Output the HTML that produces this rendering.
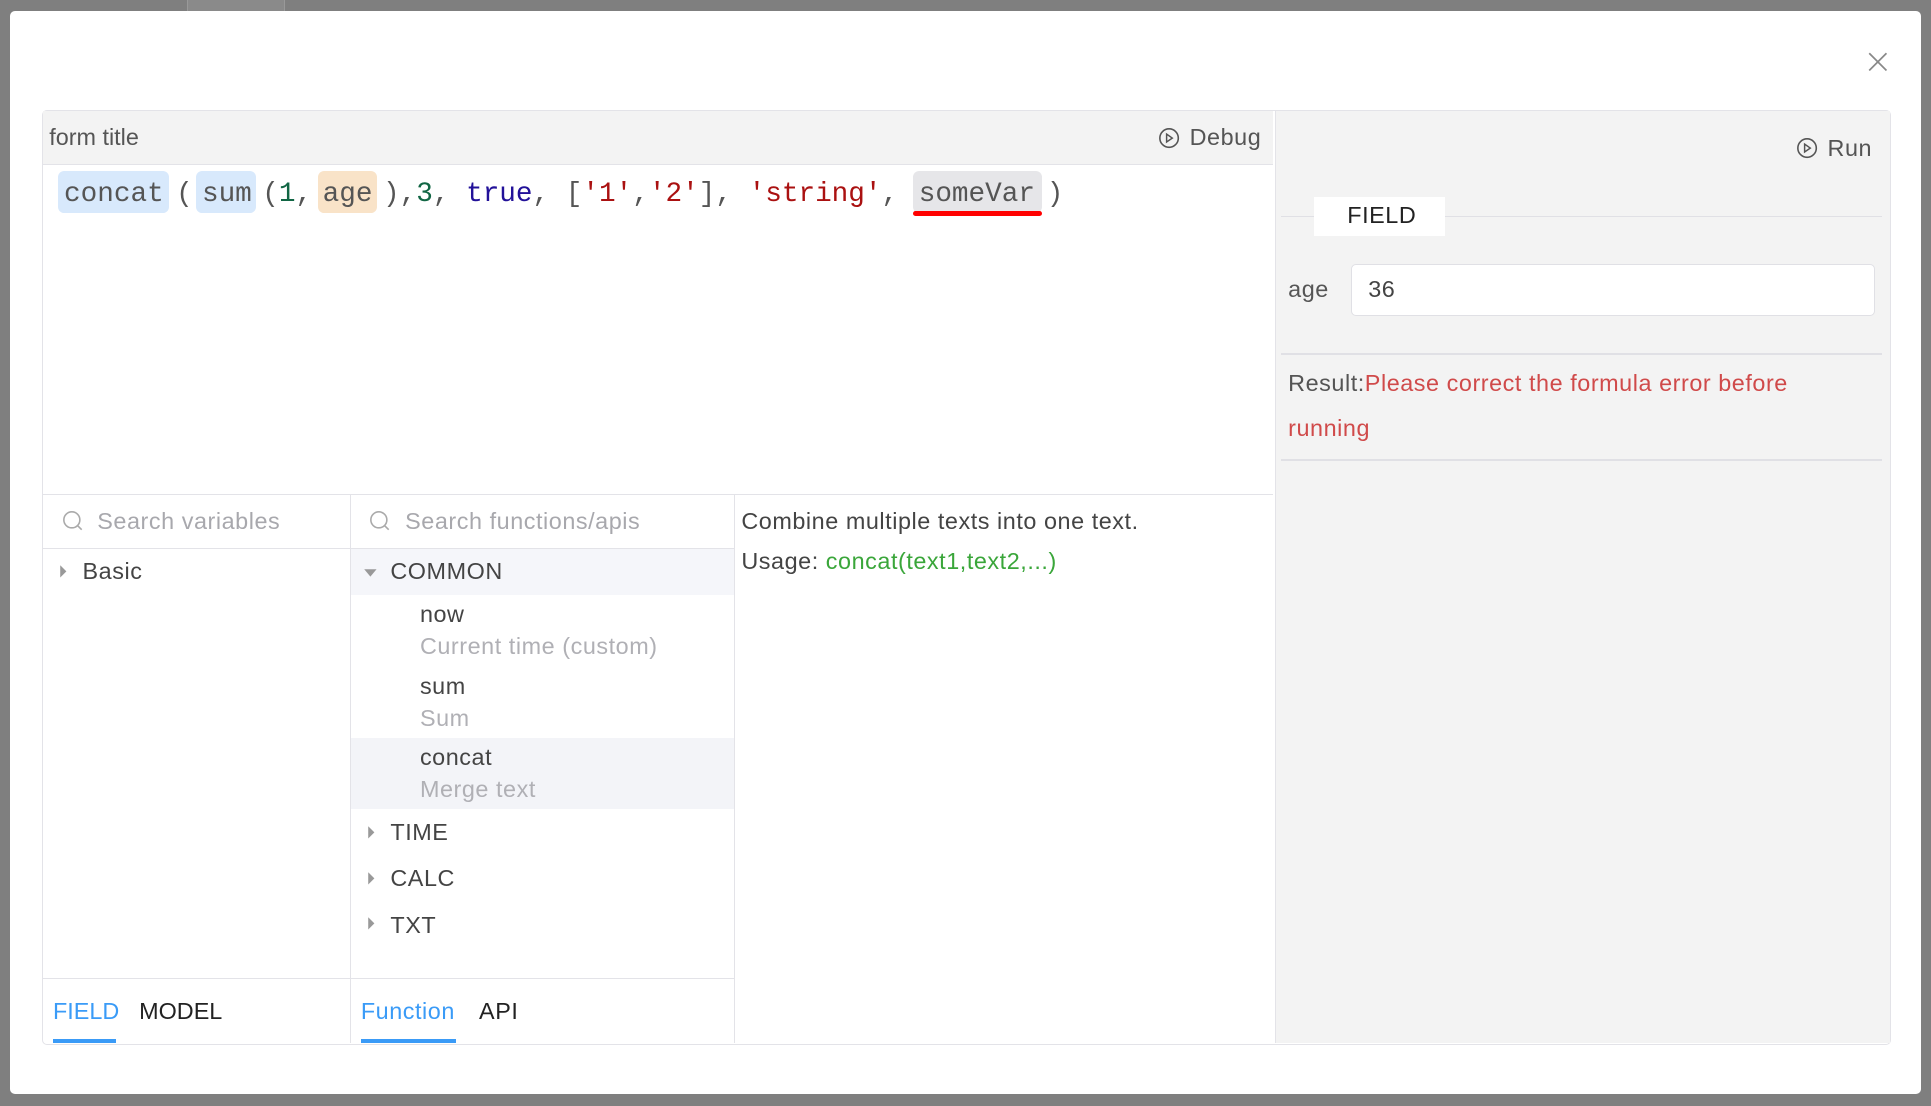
<!DOCTYPE html>
<html><head><meta charset="utf-8"><style>
html,body{margin:0;padding:0;}
body{width:1931px;height:1106px;overflow:hidden;background:#7f7f7f;}
#w{zoom:1.23151;width:1568px;height:898px;position:relative;font-family:"Liberation Sans","Noto Sans CJK SC",sans-serif;color:#333;}
.a{position:absolute;}
.modal{left:8px;top:9px;width:1552px;height:879px;background:#fff;border-radius:4px;}
.t{font-size:19px;line-height:1;letter-spacing:0.45px;}
.code{font-family:"Liberation Mono","DejaVu Sans Mono",monospace;font-size:22.5px;color:#555;white-space:pre;}
.tk{position:absolute;top:139px;height:34px;border-radius:5px;}
</style></head><body><div id="w">
<div class="a" style="left:152px;top:0;width:78px;height:9px;background:#8a8a8a;border-left:1px solid #999;border-right:1px solid #999"></div>
<div class="a modal"></div>
<svg class="a" style="left:1517px;top:42px" width="16" height="16" viewBox="0 0 16 16"><path d="M1 1L15 15M15 1L1 15" stroke="#888" stroke-width="1.4"/></svg>

<div class="a" style="left:34px;top:89px;width:1500px;height:758px;border:1px solid #e3e3e8;border-radius:4px;"></div>
<div class="a" style="left:35px;top:90px;width:999px;height:43px;background:#f3f3f3;border-bottom:1px solid #e3e3e8"></div>
<div class="a t" style="left:40px;top:102px;color:#555;letter-spacing:0">form title</div>
<svg class="a" style="left:940px;top:103px" width="18" height="18" viewBox="0 0 18 18"><circle cx="9" cy="9" r="7.5" fill="none" stroke="#555" stroke-width="1.3"/><path d="M7 5.8L11.6 9L7 12.2Z" fill="none" stroke="#555" stroke-width="1.2"/></svg>
<div class="a t" style="left:966px;top:102px;color:#555">Debug</div>

<div class="a" style="left:1035px;top:90px;width:499px;height:757px;background:#f3f3f3;border-left:1px solid #e3e3e8"></div>

<div class="tk" style="left:47px;width:90px;background:#d8e9fc"></div>
<div class="tk" style="left:159px;width:49px;background:#d8e9fc"></div>
<div class="tk" style="left:258px;width:48px;background:#f9e3c8"></div>
<div class="tk" style="left:741px;width:105px;background:#e6e6e9"></div>
<div class="a" style="left:741px;top:171px;width:105px;height:4px;background:#f00;border-radius:2px"></div>
<div class="a code" style="left:52px;top:145px">concat</div>
<div class="a code" style="left:143px;top:145px">(</div>
<div class="a code" style="left:164px;top:145px">sum</div>
<div class="a code" style="left:213px;top:145px">(<span style="color:#116644">1</span>,</div>
<div class="a code" style="left:262px;top:145px">age</div>
<div class="a code" style="left:311px;top:145px">),<span style="color:#116644">3</span>, <span style="color:#221199">true</span>, [<span style="color:#aa1111">'1'</span>,<span style="color:#aa1111">'2'</span>], <span style="color:#aa1111">'string'</span>,</div>
<div class="a code" style="left:746px;top:145px">someVar</div>
<div class="a code" style="left:850px;top:145px">)</div>

<div class="a" style="left:35px;top:401px;width:999px;height:1px;background:#e3e3e8"></div>
<div class="a" style="left:284px;top:401px;width:1px;height:446px;background:#e3e3e8"></div>
<div class="a" style="left:596px;top:401px;width:1px;height:446px;background:#e3e3e8"></div>
<div class="a" style="left:35px;top:445px;width:561px;height:1px;background:#e3e3e8"></div>
<div class="a" style="left:35px;top:794px;width:561px;height:1px;background:#e3e3e8"></div>

<svg class="a" style="left:50px;top:414px" width="18" height="18" viewBox="0 0 18 18"><circle cx="8" cy="8" r="6.5" fill="none" stroke="#aaa" stroke-width="1.3"/><path d="M12.5 12.5L16 16" stroke="#aaa" stroke-width="1.3"/></svg>
<div class="a t" style="left:79px;top:414px;color:#a8a8ad">Search variables</div>
<svg class="a" style="left:300px;top:414px" width="18" height="18" viewBox="0 0 18 18"><circle cx="8" cy="8" r="6.5" fill="none" stroke="#aaa" stroke-width="1.3"/><path d="M12.5 12.5L16 16" stroke="#aaa" stroke-width="1.3"/></svg>
<div class="a t" style="left:329px;top:414px;color:#a8a8ad">Search functions/apis</div>

<svg class="a" style="left:48px;top:458px" width="8" height="12"><path d="M1 1L6 6L1 11Z" fill="#999"/></svg>
<div class="a t" style="left:67px;top:455px;color:#444">Basic</div>

<div class="a" style="left:285px;top:446px;width:311px;height:37px;background:#f5f6fa"></div>
<svg class="a" style="left:295px;top:461px" width="12" height="8"><path d="M1 1L11 1L6 7Z" fill="#999"/></svg>
<div class="a t" style="left:317px;top:455px;color:#444">COMMON</div>
<div class="a t" style="left:341px;top:490px;color:#444">now</div>
<div class="a t" style="left:341px;top:516px;color:#b0b0b5">Current time (custom)</div>
<div class="a t" style="left:341px;top:548px;color:#444">sum</div>
<div class="a t" style="left:341px;top:574px;color:#b0b0b5">Sum</div>
<div class="a" style="left:285px;top:599px;width:311px;height:58px;background:#f3f4f8"></div>
<div class="a t" style="left:341px;top:606px;color:#444">concat</div>
<div class="a t" style="left:341px;top:632px;color:#b0b0b5">Merge text</div>
<svg class="a" style="left:298px;top:670px" width="8" height="12"><path d="M1 1L6 6L1 11Z" fill="#999"/></svg>
<div class="a t" style="left:317px;top:667px;color:#444">TIME</div>
<svg class="a" style="left:298px;top:707px" width="8" height="12"><path d="M1 1L6 6L1 11Z" fill="#999"/></svg>
<div class="a t" style="left:317px;top:704px;color:#444">CALC</div>
<svg class="a" style="left:298px;top:744px" width="8" height="12"><path d="M1 1L6 6L1 11Z" fill="#999"/></svg>
<div class="a t" style="left:317px;top:742px;color:#444">TXT</div>

<div class="a t" style="left:43px;top:812px;color:#3a9bf7;letter-spacing:0">FIELD</div>
<div class="a" style="left:43px;top:844px;width:51px;height:3px;background:#3a9bf7"></div>
<div class="a t" style="left:113px;top:812px;color:#222;letter-spacing:0">MODEL</div>
<div class="a t" style="left:293px;top:812px;color:#3a9bf7">Function</div>
<div class="a" style="left:293px;top:844px;width:77px;height:3px;background:#3a9bf7"></div>
<div class="a t" style="left:389px;top:812px;color:#222">API</div>

<div class="a t" style="left:602px;top:414px;color:#444">Combine multiple texts into one text.</div>
<div class="a t" style="left:602px;top:447px;color:#444">Usage: <span style="color:#3aa63a">concat(text1,text2,...)</span></div>

<svg class="a" style="left:1458px;top:111px" width="18" height="18" viewBox="0 0 18 18"><circle cx="9" cy="9" r="7.5" fill="none" stroke="#555" stroke-width="1.3"/><path d="M7 5.8L11.6 9L7 12.2Z" fill="none" stroke="#555" stroke-width="1.2"/></svg>
<div class="a t" style="left:1484px;top:111px;color:#555">Run</div>
<div class="a" style="left:1040px;top:175px;width:488px;height:1px;background:#e0e0e5"></div>
<div class="a" style="left:1067px;top:160px;width:106px;height:32px;background:#fff"></div>
<div class="a t" style="left:1094px;top:166px;color:#222">FIELD</div>
<div class="a t" style="left:1046px;top:226px;color:#555">age</div>
<div class="a" style="left:1097px;top:214px;width:424px;height:41px;background:#fff;border:1px solid #e0e0e5;border-radius:4px"></div>
<div class="a t" style="left:1111px;top:226px;color:#444">36</div>
<div class="a" style="left:1040px;top:287px;width:488px;height:1px;background:#e0e0e5"></div>
<div class="a t" style="left:1046px;top:293px;color:#555;line-height:37px;width:440px">Result:<span style="color:#d04a4a">Please correct the formula error before running</span></div>
<div class="a" style="left:1040px;top:373px;width:488px;height:1px;background:#e0e0e5"></div>
</div></body></html>
